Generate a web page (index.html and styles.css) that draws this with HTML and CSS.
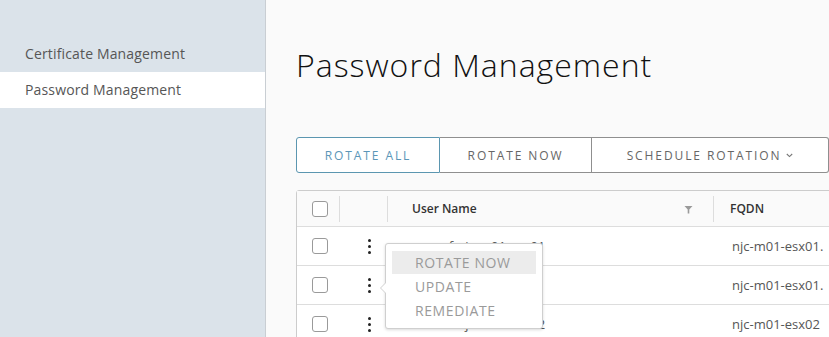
FILE: index.html
```html
<!DOCTYPE html>
<html>
<head>
<meta charset="utf-8">
<link rel="stylesheet" href="styles.css">
</head>
<body>
<div class="app">
  <nav class="sidebar">
    <div class="nav-item">Certificate Management</div>
    <div class="nav-item active">Password Management</div>
  </nav>
  <main class="content">
    <h1 class="title">Password Management</h1>
    <div class="btn-group">
      <button class="btn btn-primary">ROTATE ALL</button>
      <button class="btn">ROTATE NOW</button>
      <button class="btn">SCHEDULE ROTATION <svg class="chev" width="7" height="5" viewBox="0 0 7 5"><path d="M0.8 1 L3.5 3.6 L6.2 1" fill="none" stroke="#777" stroke-width="1.1"/></svg></button>
    </div>
    <div class="grid">
      <div class="row head">
        <div class="cell c-check"><span class="checkbox"></span></div>
        <div class="sep"></div>
        <div class="cell c-act"></div>
        <div class="sep"></div>
        <div class="cell c-user">User Name
          <svg class="filter" width="9" height="9" viewBox="0 0 9 9"><path d="M0.5 1 H8.5 L5.3 4.6 V8.5 H3.7 V4.6 Z" fill="#9a9a9a"/></svg>
        </div>
        <div class="sep"></div>
        <div class="cell c-fqdn">FQDN</div>
      </div>
      <div class="row">
        <div class="cell c-check"><span class="checkbox"></span></div>
        <div class="cell c-act"><span class="dots"><i></i><i></i><i></i></span></div>
        <div class="cell c-user">svc-vcf-njc-m01-esx01</div>
        <div class="cell c-fqdn">njc-m01-esx01.</div>
      </div>
      <div class="row">
        <div class="cell c-check"><span class="checkbox"></span></div>
        <div class="cell c-act"><span class="dots"><i></i><i></i><i></i></span></div>
        <div class="cell c-user">root</div>
        <div class="cell c-fqdn">njc-m01-esx01.</div>
      </div>
      <div class="row">
        <div class="cell c-check"><span class="checkbox"></span></div>
        <div class="cell c-act"><span class="dots"><i></i><i></i><i></i></span></div>
        <div class="cell c-user">svc-vcf-njc-m01-esx02</div>
        <div class="cell c-fqdn">njc-m01-esx02</div>
      </div>
      <div class="menu">
        <div class="menu-item hover">ROTATE NOW</div>
        <div class="menu-item">UPDATE</div>
        <div class="menu-item">REMEDIATE</div>
      </div>
    </div>
  </main>
</div>
</body>
</html>
```

FILE: styles.css
```css
* { box-sizing: border-box; }
html, body { margin: 0; padding: 0; }
body {
  width: 829px;
  height: 337px;
  overflow: hidden;
  font-family: "Open Sans", Lato, sans-serif;
  background: #fafafa;
}
.app {
  display: flex;
  height: 337px;
}
.sidebar {
  width: 266px;
  flex: none;
  background: #dbe3ea;
  border-right: 1px solid #c9ced3;
  padding-top: 36px;
}
.nav-item {
  height: 36px;
  line-height: 36px;
  padding-left: 25px;
  font-size: 14px;
  color: #565656;
  letter-spacing: 0.15px;
}
.nav-item.active {
  background: #ffffff;
}
.content {
  flex: 1;
  padding-left: 30px;
  overflow: hidden;
}
.title {
  margin: 44px 0 0 0;
  height: 42px;
  line-height: 42px;
  font-size: 32px;
  font-weight: 300;
  color: #111;
  letter-spacing: 1px;
}
.btn-group {
  display: flex;
  margin-top: 51px;
  height: 36px;
  width: 533px;
}
.btn {
  height: 36px;
  background: #fff;
  border: 1px solid #8f8f8f;
  border-left: none;
  font-family: "Open Sans", Lato, sans-serif;
  font-size: 12px;
  letter-spacing: 1.9px;
  color: #666;
  padding: 0;
  display: flex;
  align-items: center;
  justify-content: center;
  gap: 5px;
}
.btn:nth-child(2) { width: 152px; }
.btn:nth-child(3) { width: 237px; border-radius: 0 3px 3px 0; }
.btn-primary {
  width: 144px;
  border: 1px solid #5b96b0;
  border-radius: 3px 0 0 3px;
  color: #5b96b8;
}
.chev { margin-top: 1px; }
.grid {
  position: relative;
  margin-top: 17px;
  width: 600px;
  border: 1px solid #cccccc;
  border-radius: 3px;
  background: #fff;
}
.row {
  display: flex;
  align-items: center;
  height: 39px;
  border-top: 1px solid #dddddd;
  font-size: 13px;
  color: #565656;
}
.row.head {
  height: 35px;
  border-top: none;
  background: #fafafa;
  font-size: 12px;
  font-weight: 600;
  color: #333;
}
.cell { height: 100%; display: flex; align-items: center; }
.sep {
  width: 1px;
  height: 26px;
  background: #dddddd;
  flex: none;
}
.c-check { width: 42px; padding-left: 15px; flex: none; }
.c-act { width: 47px; flex: none; }
.row:not(.head) .c-act { width: 49px; padding-left: 29px; }
.c-user { width: 325px; padding-left: 24px; flex: none; position: relative; }
.row:not(.head) .c-user { width: 327px; padding-left: 25px; }
.c-fqdn { padding-left: 16px; flex: 1; white-space: nowrap; }
.row:not(.head) .c-fqdn { padding-left: 17px; }
.filter { position: absolute; right: 20px; top: 14px; }
.checkbox {
  display: block;
  width: 16px;
  height: 16px;
  border: 1px solid #9a9a9a;
  border-radius: 3px;
  background: #fff;
}
.dots {
  display: flex;
  flex-direction: column;
  gap: 3px;
}
.dots i {
  display: block;
  width: 3px;
  height: 3px;
  border-radius: 50%;
  background: #222;
}
.menu {
  position: absolute;
  left: 88px;
  top: 52px;
  width: 158px;
  height: 86px;
  background: #fff;
  border: 1px solid #cfcfcf;
  border-radius: 3px;
  box-shadow: 0 1px 3px rgba(0,0,0,0.15);
  padding: 7px 6px 0 6px;
  z-index: 2;
}
.menu::before {
  content: "";
  position: absolute;
  left: -6px;
  top: 38px;
  width: 0;
  height: 0;
  border-top: 6px solid transparent;
  border-bottom: 6px solid transparent;
  border-right: 6px solid #cfcfcf;
}
.menu::after {
  content: "";
  position: absolute;
  left: -5px;
  top: 38px;
  width: 0;
  height: 0;
  border-top: 6px solid transparent;
  border-bottom: 6px solid transparent;
  border-right: 6px solid #fff;
}
.menu-item {
  height: 23px;
  line-height: 23px;
  margin-bottom: 1px;
  padding-left: 23px;
  font-size: 14px;
  color: #9a9a9a;
  letter-spacing: 0.6px;
}
.menu-item.hover { background: #ececec; }
```
